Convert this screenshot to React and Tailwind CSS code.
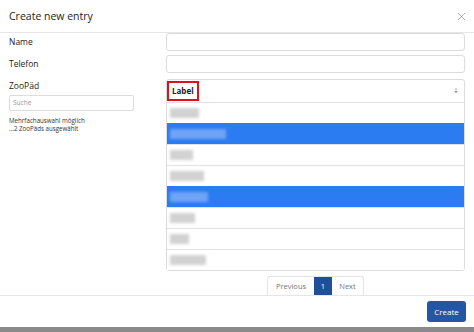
import { X } from "lucide-react";

const rows = [
    { selected: false, blob: "w-[29px]" },
    { selected: true, blob: "w-[56px]" },
    { selected: false, blob: "w-[23px]" },
    { selected: false, blob: "w-[34px]" },
    { selected: true, blob: "w-[38px]" },
    { selected: false, blob: "w-[25px]" },
    { selected: false, blob: "w-[19px]" },
    { selected: false, blob: "w-[36px]" },
];

export default function App() {
    return (
        <div className="w-[474px] h-[332px] bg-white flex flex-col overflow-hidden text-[#333]" style={{ fontFamily: '"Open Sans", "Noto Sans", sans-serif' }}>
            {/* header */}
            <div className="h-[33px] shrink-0 border-b border-[#e6e6e6] flex items-center justify-between pl-[9px] pr-[6px]">
                <span className="text-[10.5px] text-[#222] leading-none">Create new entry</span>
                <X size={13} strokeWidth={1.1} className="text-[#777]" />
            </div>

            {/* body */}
            <div className="h-[262px] shrink-0 flex flex-col pr-[9px]">
                <div className="flex items-center">
                    <label className="w-[166px] pl-[9px] text-[8.5px] text-[#222]">Name</label>
                    <div className="flex-1 h-[18px] border border-[#dcdcdc] rounded-[3px]" />
                </div>
                <div className="flex items-center mt-[4px]">
                    <label className="w-[166px] pl-[9px] text-[8.5px] text-[#222]">Telefon</label>
                    <div className="flex-1 h-[18px] border border-[#dcdcdc] rounded-[3px]" />
                </div>

                <div className="flex mt-[6px]">
                    <div className="w-[166px] pl-[9px] flex flex-col">
                        <label className="text-[8.5px] text-[#222] leading-none mt-[3px]">ZooPäd</label>
                        <div className="mt-[4px] w-[125px] h-[16px] border border-[#dcdcdc] rounded-[2px] flex items-center pl-[3px] text-[6.5px] text-[#999]">Suche</div>
                        <p className="mt-[6px] text-[6.2px] leading-[8px] text-[#333]">Mehrfachauswahl möglich<br />...2 ZooPäds ausgewählt</p>
                    </div>

                    <div className="flex-1 flex flex-col">
                        <div className="border border-[#dcdcdc] rounded-[3px]">
                            <div className="h-[22px] flex items-center justify-between pr-[6px]">
                                <span className="h-[20px] px-[3px] border-2 border-[#e0101e] flex items-center text-[8px] font-bold text-[#222]">Label</span>
                                <svg width="4" height="6" viewBox="0 0 4 6" className="text-[#999]">
                                    <line x1="2" y1="0" x2="2" y2="2.5" stroke="currentColor" strokeWidth="0.8" />
                                    <path d="M0.3 3 L3.7 3 L2 5.5 Z" fill="currentColor" />
                                </svg>
                            </div>
                            {rows.map((r, i) => (
                                <div key={i} className={"h-[21px] border-t flex items-center pl-[3px] " + (r.selected ? "bg-[#2b7cf1] border-[#2b7cf1]" : "bg-white border-[#e2e2e2]")}>
                                    <div className={"h-[10px] blur-[1.5px] " + r.blob + (r.selected ? " bg-[#6fa4f6]" : " bg-[#d2d2d2]")} />
                                </div>
                            ))}
                        </div>

                        <div className="mt-[5px] flex justify-center">
                            <div className="flex h-[20px] border border-b-0 border-[#e4e4e4] rounded-t-[3px] text-[7.5px]">
                                <span className="w-[46px] flex items-center justify-center text-[#777]">Previous</span>
                                <span className="w-[18px] flex items-center justify-center bg-[#1f4f98] text-white">1</span>
                                <span className="w-[31px] flex items-center justify-center text-[#777]">Next</span>
                            </div>
                        </div>
                    </div>
                </div>
            </div>

            {/* footer */}
            <div className="h-[32px] shrink-0 border-t border-[#e6e6e6] flex items-start justify-end pr-[8px] pt-[5px]">
                <button className="h-[21px] w-[39px] rounded-[3px] bg-[#2456a6] text-white text-[8px] flex items-center justify-center">Create</button>
            </div>
            <div className="flex-1 bg-[#8a8a8a]" />
        </div>
    );
}
